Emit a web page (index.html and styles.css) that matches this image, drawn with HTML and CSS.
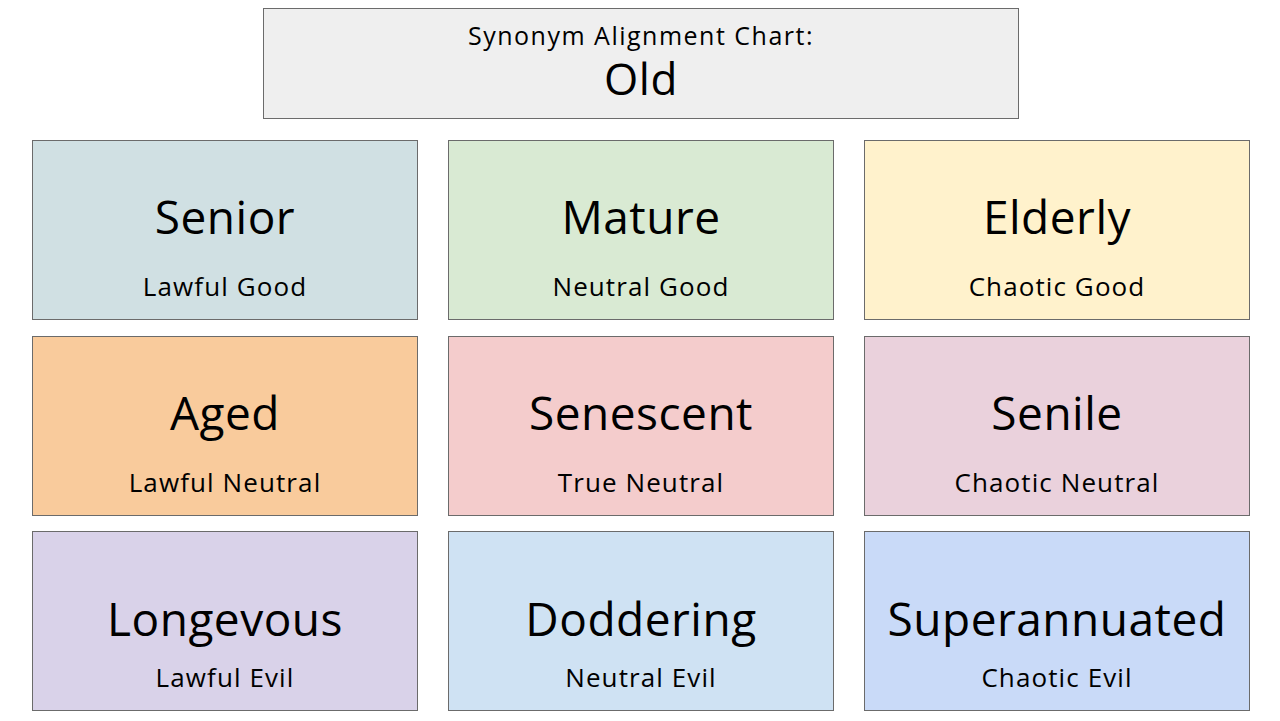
FILE: index.html
```html
<!DOCTYPE html>
<html>
<head>
<meta charset="utf-8">
<link rel="stylesheet" href="styles.css">
</head>
<body>
<header class="chart-head">
  <div class="head-sub">Synonym Alignment Chart:</div>
  <div class="head-word">Old</div>
</header>
<main class="grid">
  <div class="card c1"><div class="word">Senior</div><div class="align">Lawful Good</div></div>
  <div class="card c2"><div class="word">Mature</div><div class="align">Neutral Good</div></div>
  <div class="card c3"><div class="word">Elderly</div><div class="align">Chaotic Good</div></div>
  <div class="card c4"><div class="word">Aged</div><div class="align">Lawful Neutral</div></div>
  <div class="card c5"><div class="word">Senescent</div><div class="align">True Neutral</div></div>
  <div class="card c6"><div class="word">Senile</div><div class="align">Chaotic Neutral</div></div>
  <div class="card c7 low"><div class="word">Longevous</div><div class="align">Lawful Evil</div></div>
  <div class="card c8 low"><div class="word">Doddering</div><div class="align">Neutral Evil</div></div>
  <div class="card c9 low"><div class="word">Superannuated</div><div class="align">Chaotic Evil</div></div>
</main>
</body>
</html>
```
FILE: styles.css
```css
html, body {
  margin: 0;
  padding: 0;
  background: #ffffff;
}
body {
  font-family: "Open Sans", "DejaVu Sans", sans-serif;
  color: #000;
  width: 1280px;
  height: 721px;
  overflow: hidden;
}
.chart-head {
  box-sizing: border-box;
  width: 756px;
  height: 111px;
  margin: 8px 0 0 263px;
  background: #efefef;
  border: 1px solid #6b6b6b;
  padding-top: 14px;
  text-align: center;
  display: flex;
  flex-direction: column;
  align-items: center;
  gap: 8px;
}
.head-sub {
  font-size: 25px;
  line-height: 25px;
  letter-spacing: 1.5px;
}
.head-word {
  font-size: 44px;
  line-height: 44px;
  letter-spacing: 0.5px;
}
.grid {
  display: grid;
  grid-template-columns: repeat(3, 386px);
  grid-auto-rows: 180px;
  column-gap: 30px;
  row-gap: 15.5px;
  padding: 21px 0 0 32px;
}
.card {
  box-sizing: border-box;
  border: 1px solid #6b6b6b;
  padding-top: 52px;
  display: flex;
  flex-direction: column;
  align-items: center;
  text-align: center;
  gap: 34px;
}
.card.low {
  padding-top: 63px;
  gap: 23px;
}
.word {
  font-size: 46px;
  line-height: 46px;
  letter-spacing: 0.5px;
}
.align {
  font-size: 26px;
  line-height: 26px;
  letter-spacing: 1.1px;
}
.c1 { background: #d0e0e3; }
.c2 { background: #d9ead3; }
.c3 { background: #fff2cc; }
.c4 { background: #f9cb9c; }
.c5 { background: #f4cccc; }
.c6 { background: #ead1dc; }
.c7 { background: #d9d2e9; }
.c8 { background: #cfe2f3; }
.c9 { background: #c9daf8; }
```
